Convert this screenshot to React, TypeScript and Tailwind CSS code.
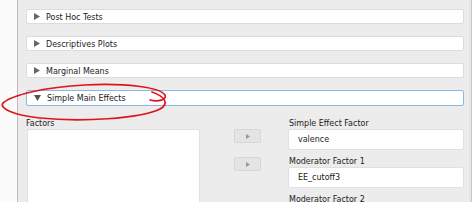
import React from "react";

const font = { fontFamily: '"DejaVu Sans Condensed", "Liberation Sans", Arial, sans-serif' };

function Tri({ down = false }: { down?: boolean }) {
  return down ? (
    <svg width="7" height="6" viewBox="0 0 7 6" className="shrink-0">
      <polygon points="0,0 7,0 3.5,6" fill="#555" />
    </svg>
  ) : (
    <svg width="6" height="7" viewBox="0 0 6 7" className="shrink-0">
      <polygon points="0,0 6,3.5 0,7" fill="#666" />
    </svg>
  );
}

function Section({ label }: { label: string }) {
  return (
    <div className="h-[15px] flex items-center pl-[7px] gap-[6px] bg-white rounded-[2px] border border-[#dcdcdc]">
      <Tri />
      <span className="text-[8.9px] leading-[10px] text-[#222]">{label}</span>
    </div>
  );
}

function Field({ label, value }: { label: string; value: string }) {
  return (
    <div className="flex flex-col">
      <div className="h-[17px] flex items-end pb-[1px] text-[8.9px] leading-[9px] text-[#222] pl-[1px]">
        {label}
      </div>
      <div className="h-[21px] bg-white border border-[#e0e0e0] rounded-[2px] flex items-center pl-[9px] text-[8.9px] text-[#222]">
        {value}
      </div>
    </div>
  );
}

function ArrowBtn() {
  return (
    <div className="w-[27px] h-[14px] bg-[#e4e4e4] border border-[#d6d6d6] rounded-[1px] flex items-center justify-center">
      <svg width="4" height="5" viewBox="0 0 4 5">
        <polygon points="0,0 4,2.5 0,5" fill="#999" />
      </svg>
    </div>
  );
}

export default function App() {
  return (
    <div className="relative w-[474px] h-[202px] overflow-hidden flex bg-white" style={font}>
      <div className="w-[17px] bg-[#fbfbfb]" />
      <div className="w-px bg-[#bcbcbc]" />
      <div className="flex-1 bg-[#ececec] flex flex-col">
        <div className="h-[3px] bg-[#e2e2e2]" />
        <div className="flex flex-col pl-[8px] pr-[5px] pt-[9px]">
          <div className="flex flex-col gap-[12px]">
            <Section label="Post Hoc Tests" />
            <Section label="Descriptives Plots" />
            <Section label="Marginal Means" />
            <div>
              <div className="h-[16px] flex items-center pl-[7px] gap-[6px] bg-white rounded-[2px] border border-[#8cb8e6]">
                <Tri down />
                <span className="text-[8.9px] leading-[10px] text-[#222]">Simple Main Effects</span>
              </div>
            </div>
          </div>
          <div className="flex mt-[1px]">
            <div className="w-[174px] flex flex-col">
              <div className="h-[22px] flex items-end pb-[1px] text-[8.9px] leading-[9px] text-[#222]">
                Factors
              </div>
              <div className="ml-[1px] h-[80px] bg-white border border-[#e0e0e0] rounded-[2px]" />
            </div>
            <div className="w-[88px] flex flex-col items-center pt-[22px] gap-[14px] pl-[7px]">
              <ArrowBtn />
              <ArrowBtn />
            </div>
            <div className="flex-1 flex flex-col pt-[5px]">
              <Field label="Simple Effect Factor" value="valence" />
              <Field label="Moderator Factor 1" value="EE_cutoff3" />
              <Field label="Moderator Factor 2" value="" />
            </div>
          </div>
        </div>
      </div>
      <div className="w-[2px] bg-[#e6e6e6]" />
      <div className="w-px bg-[#c8c8c8]" />
      <div className="w-[2px] bg-white" />
      <svg
        className="absolute left-0 top-0 pointer-events-none"
        width="474"
        height="202"
        viewBox="0 0 474 202"
      >
        <path
          d="M 150 100 C 158 102, 167 100, 165 95 C 160 87, 125 83, 85 85 C 45 87, 12 95, 3 103 C -1 108, 12 115, 40 118 C 80 122, 140 119, 160 109 C 169 104, 166 97, 152 92"
          fill="none"
          stroke="#e0141c"
          strokeWidth="1.7"
          strokeLinecap="round"
        />
      </svg>
    </div>
  );
}
